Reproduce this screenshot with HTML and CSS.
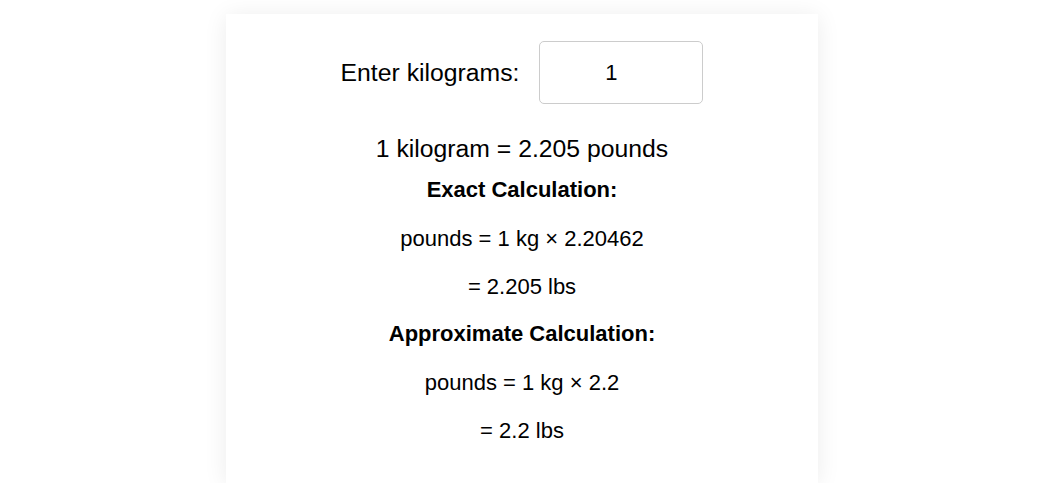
FILE: index.html
```html
<!DOCTYPE html>
<html>
<head>
<meta charset="utf-8">
<link rel="stylesheet" href="styles.css">
</head>
<body>
<div class="card">
  <div class="input-row">
    <label class="label" for="kg">Enter kilograms:</label>
    <input class="kg-input" id="kg" type="text" value="1">
  </div>
  <div class="result">1 kilogram = 2.205 pounds</div>
  <p class="heading">Exact Calculation:</p>
  <p class="line">pounds = 1 kg × 2.20462</p>
  <p class="line">= 2.205 lbs</p>
  <p class="heading">Approximate Calculation:</p>
  <p class="line">pounds = 1 kg × 2.2</p>
  <p class="line">= 2.2 lbs</p>
</div>
</body>
</html>
```

FILE: styles.css
```css
html, body {
  margin: 0;
  padding: 0;
  background: #ffffff;
}
body {
  font-family: "Liberation Sans", Arial, sans-serif;
  color: #000;
}
.card {
  box-sizing: border-box;
  width: 592px;
  height: 469px;
  margin: 14px 0 0 226px;
  padding: 27px 0 0 0;
  background: #fff;
  box-shadow: 0 2px 22px rgba(0, 0, 0, 0.08);
  text-align: center;
}
.input-row {
  display: flex;
  justify-content: center;
  align-items: center;
  gap: 20px;
}
.label {
  font-size: 24.75px;
}
.kg-input {
  box-sizing: border-box;
  width: 164px;
  height: 63px;
  border: 1px solid #cccccc;
  border-radius: 5px;
  font-family: "Liberation Sans", Arial, sans-serif;
  font-size: 22px;
  text-align: center;
  color: #000;
  padding: 0 20px 0 0;
  outline: none;
}
.result {
  font-size: 24.75px;
  line-height: 28px;
  margin-top: 31px;
}
.heading, .line {
  font-size: 22px;
  line-height: 26px;
  margin: 0;
}
.heading {
  font-weight: bold;
}
.result + .heading {
  margin-top: 14px;
}
.line {
  margin-top: 22px;
}
.heading + .line {
  margin-top: 23px;
}
.line + .heading {
  margin-top: 21px;
}
```
